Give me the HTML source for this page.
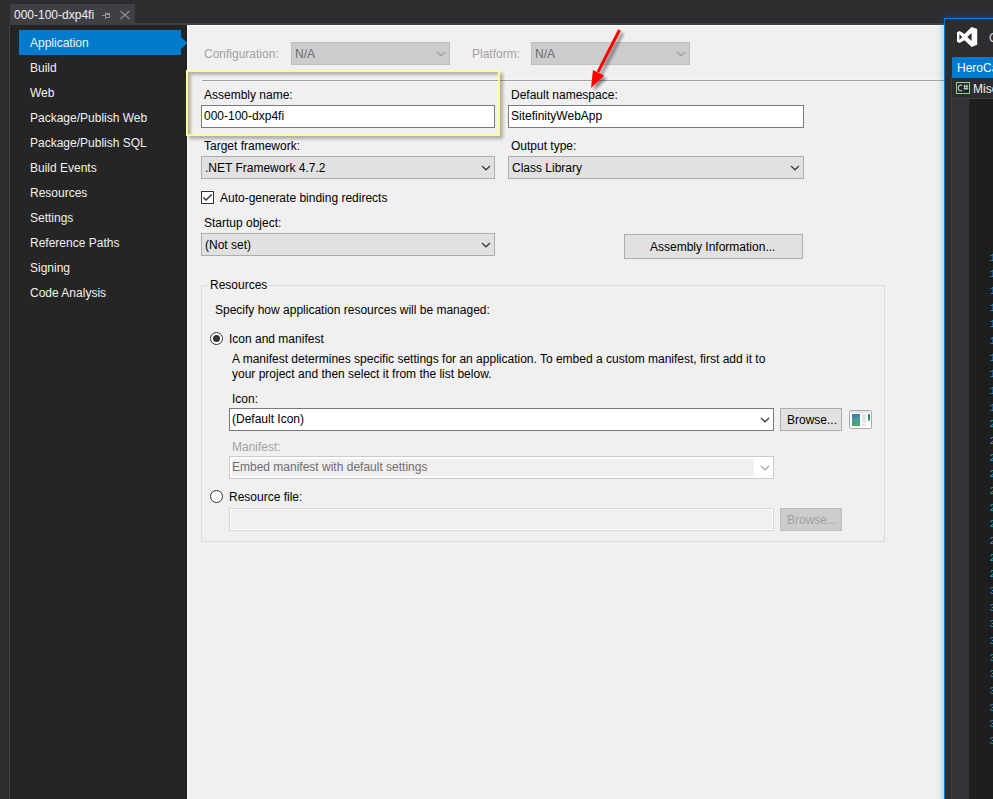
<!DOCTYPE html>
<html><head><meta charset="utf-8">
<style>
*{margin:0;padding:0;box-sizing:border-box}
html,body{width:993px;height:799px;overflow:hidden;background:#2d2d30;position:relative;font-family:"Liberation Sans",sans-serif;font-size:12px}
.a{position:absolute}
.t{position:absolute;font:12px/15px "Liberation Sans",sans-serif;white-space:nowrap;color:#000}
.side .t{color:#f1f1f1}
.cb{position:absolute;background:#e1e1e1;border:1px solid #adadad}
.cbd{position:absolute;background:#cccccc;border:1px solid #bfbfbf}
.tb{position:absolute;background:#fff;border:1px solid #7a7a7a}
.chev{position:absolute;width:9px;height:5px}
</style></head><body>
<!-- tab well -->
<div class="a" style="left:10px;top:4px;width:125px;height:19px;background:#3f3f46"></div>
<div class="a" style="left:10px;top:23px;width:934px;height:2px;background:#3f3f46"></div>
<div class="t" style="left:14px;top:8px;color:#f1f1f1">000-100-dxp4fi</div>
<!-- pin icon -->
<svg class="a" style="left:100px;top:10px" width="14" height="12" viewBox="0 0 14 12">
<path d="M2 5.5H5.5M5.5 2V9M6 3.5H9.5V7.5H6" stroke="#8f8f8f" stroke-width="1" fill="none"/>
<rect x="6" y="3" width="4" height="2" fill="#8f8f8f"/>
</svg>
<!-- close icon -->
<svg class="a" style="left:119px;top:10px" width="12" height="10" viewBox="0 0 12 10">
<path d="M1.5 1L10.5 9M10.5 1L1.5 9" stroke="#8f8f8f" stroke-width="1.2" fill="none"/>
</svg>

<!-- left strip line -->
<div class="a" style="left:9px;top:25px;width:1px;height:774px;background:#3f3f46"></div>
<!-- sidebar -->
<div class="a side" style="left:10px;top:25px;width:177px;height:774px;background:#252526">
  <div class="a" style="left:9px;top:5px;width:162px;height:25px;background:#007acc"></div>
  <div class="a" style="left:176px;top:0;width:1px;height:774px;background:#1b1b1c"></div>
  <svg class="a" style="left:171px;top:12px" width="7" height="12" viewBox="0 0 7 12"><path d="M0 0L6.5 6L0 12Z" fill="#007acc"/></svg>
  <div class="t" style="left:20px;top:11px">Application</div>
  <div class="t" style="left:20px;top:36px">Build</div>
  <div class="t" style="left:20px;top:61px">Web</div>
  <div class="t" style="left:20px;top:86px">Package/Publish Web</div>
  <div class="t" style="left:20px;top:111px">Package/Publish SQL</div>
  <div class="t" style="left:20px;top:136px">Build Events</div>
  <div class="t" style="left:20px;top:161px">Resources</div>
  <div class="t" style="left:20px;top:186px">Settings</div>
  <div class="t" style="left:20px;top:211px">Reference Paths</div>
  <div class="t" style="left:20px;top:236px">Signing</div>
  <div class="t" style="left:20px;top:261px">Code Analysis</div>
</div>

<!-- panel -->
<div class="a" id="panel" style="left:187px;top:25px;width:757px;height:774px;background:#f0f0f0;border-left:1px solid #fff;border-top:1px solid #fff"></div>


<!-- config row -->
<div class="t" style="left:204px;top:47px;color:#a2a2a2">Configuration:</div>
<div class="cbd" style="left:291px;top:42px;width:159px;height:23px"></div>
<div class="t" style="left:295px;top:47px;color:#6d6d6d">N/A</div>
<svg class="chev" style="left:436px;top:51px;width:10px;height:6px" viewBox="0 0 10 6"><path d="M1 1L5 4.8L9 1" stroke="#a0a0a0" stroke-width="1.3" fill="none"/></svg>
<div class="t" style="left:472px;top:47px;color:#a2a2a2">Platform:</div>
<div class="cbd" style="left:531px;top:42px;width:159px;height:23px"></div>
<div class="t" style="left:535px;top:47px;color:#6d6d6d">N/A</div>
<svg class="chev" style="left:676px;top:51px;width:10px;height:6px" viewBox="0 0 10 6"><path d="M1 1L5 4.8L9 1" stroke="#a0a0a0" stroke-width="1.3" fill="none"/></svg>
<!-- separator -->
<div class="a" style="left:201px;top:79px;width:743px;height:3px;background:#f6f6f6"></div><div class="a" style="left:201px;top:80px;width:1px;height:1px;background:#fff"></div>
<div class="a" style="left:202px;top:80px;width:742px;height:1px;background:#a0a0a0"></div>

<!-- assembly / namespace -->
<div class="t" style="left:204px;top:88px">Assembly name:</div>
<div class="tb" style="left:201px;top:105px;width:294px;height:23px"></div>
<div class="t" style="left:204px;top:109px">000-100-dxp4fi</div>
<div class="t" style="left:511px;top:88px">Default namespace:</div>
<div class="tb" style="left:508px;top:105px;width:296px;height:23px"></div>
<div class="t" style="left:511px;top:109px">SitefinityWebApp</div>

<!-- framework / output -->
<div class="t" style="left:204px;top:139px">Target framework:</div>
<div class="cb" style="left:201px;top:156px;width:294px;height:23px"></div>
<div class="t" style="left:205px;top:161px">.NET Framework 4.7.2</div>
<svg class="chev" style="left:481px;top:165px;width:10px;height:6px" viewBox="0 0 10 6"><path d="M1 1L5 4.8L9 1" stroke="#3a3a3a" stroke-width="1.3" fill="none"/></svg>
<div class="t" style="left:511px;top:139px">Output type:</div>
<div class="cb" style="left:508px;top:156px;width:296px;height:23px"></div>
<div class="t" style="left:512px;top:161px">Class Library</div>
<svg class="chev" style="left:790px;top:165px;width:10px;height:6px" viewBox="0 0 10 6"><path d="M1 1L5 4.8L9 1" stroke="#3a3a3a" stroke-width="1.3" fill="none"/></svg>

<!-- checkbox -->
<div class="a" style="left:200px;top:190px;width:15px;height:15px;background:#f9f9f9"></div>
<div class="a" style="left:201px;top:191px;width:13px;height:13px;border:1px solid #333;background:#fff"></div>
<svg class="a" style="left:201px;top:191px" width="13" height="13" viewBox="0 0 13 13"><path d="M2.3 6.4L5 9.1L10.6 3.4" stroke="#333" stroke-width="1.4" fill="none"/></svg>
<div class="t" style="left:220px;top:191px">Auto-generate binding redirects</div>

<!-- startup -->
<div class="t" style="left:204px;top:216px">Startup object:</div>
<div class="cb" style="left:201px;top:233px;width:294px;height:23px"></div>
<div class="t" style="left:205px;top:238px">(Not set)</div>
<svg class="chev" style="left:481px;top:242px;width:10px;height:6px" viewBox="0 0 10 6"><path d="M1 1L5 4.8L9 1" stroke="#3a3a3a" stroke-width="1.3" fill="none"/></svg>
<div class="cb" style="left:624px;top:234px;width:179px;height:25px"></div>
<div class="t" style="left:650px;top:240px">Assembly Information...</div>

<!-- resources group -->
<div class="a" style="left:201px;top:285px;width:684px;height:257px;border:1px solid #dcdcdc"></div>
<div class="a" style="left:208px;top:280px;width:61px;height:10px;background:#f0f0f0"></div>
<div class="t" style="left:210px;top:278px">Resources</div>
<div class="t" style="left:215px;top:303px">Specify how application resources will be managed:</div>

<svg class="a" style="left:210px;top:332px" width="13" height="13" viewBox="0 0 13 13"><circle cx="6.5" cy="6.5" r="6" fill="#fff" stroke="#333" stroke-width="1"/><circle cx="6.5" cy="6.5" r="3.5" fill="#333"/></svg>
<div class="t" style="left:229px;top:332px">Icon and manifest</div>
<div class="t" style="left:232px;top:352px">A manifest determines specific settings for an application. To embed a custom manifest, first add it to</div>
<div class="t" style="left:232px;top:367px">your project and then select it from the list below.</div>
<div class="t" style="left:232px;top:392px">Icon:</div>
<div class="tb" style="left:229px;top:408px;width:545px;height:23px"></div>
<div class="t" style="left:232px;top:412px">(Default Icon)</div>
<svg class="chev" style="left:760px;top:417px;width:10px;height:6px" viewBox="0 0 10 6"><path d="M1 1L5 4.8L9 1" stroke="#3a3a3a" stroke-width="1.3" fill="none"/></svg>
<div class="cb" style="left:780px;top:408px;width:62px;height:23px"></div>
<div class="t" style="left:787px;top:413px">Browse...</div>
<!-- icon preview -->
<div class="a" style="left:849px;top:410px;width:23px;height:19px;border:1.5px solid #ababab;border-radius:2px;background:#fff"></div>
<div class="a" style="left:851px;top:411px;width:19px;height:2px;background:#dfe3ea"></div>
<div class="a" style="left:852px;top:414px;width:8px;height:12px;background:linear-gradient(165deg,#3d6fae 0%,#4a9a9a 45%,#3fae5a 100%)"></div>
<div class="a" style="left:862px;top:414px;width:4px;height:9px;background:#e3e3e3"></div>
<div class="a" style="left:862px;top:424px;width:4px;height:2px;background:#e3e3e3"></div>
<div class="a" style="left:868px;top:414px;width:2px;height:7px;border-radius:1px;background:linear-gradient(180deg,#2a5faa,#3fae4a)"></div>
<div class="t" style="left:232px;top:440px;color:#a2a2a2">Manifest:</div>
<div class="a" style="left:229px;top:456px;width:545px;height:23px;border:1px solid #cbcbcb;background:#fff"></div>
<div class="a" style="left:232px;top:459px;width:522px;height:17px;background:#f0f0f0"></div>
<div class="t" style="left:232px;top:460px;color:#6d6d6d">Embed manifest with default settings</div>
<svg class="chev" style="left:760px;top:465px;width:10px;height:6px" viewBox="0 0 10 6"><path d="M1 1L5 4.8L9 1" stroke="#a8a8a8" stroke-width="1.3" fill="none"/></svg>

<svg class="a" style="left:210px;top:490px" width="13" height="13" viewBox="0 0 13 13"><circle cx="6.5" cy="6.5" r="6" fill="#fff" stroke="#333" stroke-width="1"/></svg>
<div class="t" style="left:229px;top:490px">Resource file:</div>
<div class="a" style="left:229px;top:508px;width:545px;height:23px;border:1px solid #d9d9d9;background:#f0f0f0;box-shadow:inset 0 0 0 1px #fff"></div>
<div class="cbd" style="left:780px;top:508px;width:62px;height:23px"></div>
<div class="t" style="left:787px;top:513px;color:#a2a2a2">Browse...</div>

<!-- yellow highlight -->
<div class="a" style="left:186px;top:70px;width:314px;height:66px;border:2px solid #fefd92;box-shadow:3px 3px 3px rgba(0,0,0,0.28), inset 3px 3px 3px rgba(0,0,0,0.25)"></div>

<!-- red arrow -->
<svg class="a" style="left:580px;top:20px" width="60" height="80" viewBox="580 20 60 80">
<defs><filter id="sh" x="-50%" y="-50%" width="200%" height="200%"><feGaussianBlur stdDeviation="1.8"/></filter></defs>
<g transform="translate(3,3)" filter="url(#sh)" opacity="0.42">
<path d="M619.5 30L598 72" stroke="#000" stroke-width="3"/>
<path d="M593 70L604 75.5L591 88Z" fill="#000"/>
</g>
<path d="M619.5 30L598 72" stroke="#ff0000" stroke-width="3"/>
<path d="M593 70L604 75.5L591 88Z" fill="#ff0000"/>
</svg>



<!-- glow -->


<div class="a" style="left:944px;top:18px;width:60px;height:800px;background:#2d2d30;border:1px solid #007acc;box-shadow:0 0 8px rgba(0,122,204,0.45)"></div>
<svg class="a" style="left:955px;top:25px" width="25" height="25" viewBox="955 25 25 25">
<path fill-rule="evenodd" fill="#fff" d="M971.6 26.9L977.2 29.1L977.2 44.7L971.6 47L964.5 40.2L959.6 43L957 41.8L957 32.2L959.6 31L964.5 33.9Z M959.4 33.9L962.1 36.9L959.4 39.9Z M971.6 32.9L967.3 37L971.6 41.1Z"/>
</svg>
<div class="t" style="left:989px;top:31px;color:#d8d8d8">O</div>
<div class="a" style="left:952px;top:57px;width:41px;height:21px;background:#007acc;overflow:hidden">
  <div class="t" style="left:5px;top:4px;color:#fff">HeroCatalog</div>
</div>
<div class="a" style="left:951px;top:78px;width:1px;height:721px;background:#3f3f46"></div>
<div class="a" style="left:952px;top:98px;width:41px;height:1px;background:#3f3f46"></div>
<div class="a" style="left:956px;top:82px;width:14px;height:12px;border:1px solid #86d98a;background:#252526"></div>
<svg class="a" style="left:956px;top:82px" width="14" height="12" viewBox="956 82 14 12"><path d="M962.2 85.3Q958.3 84.3 958.3 87.9Q958.3 91.5 962.2 90.6" stroke="#d8d8d8" stroke-width="1.1" fill="none"/><path d="M964.8 84.5V90M966.9 84.5V90M963.6 86.3H968.2M963.6 88.4H968.2" stroke="#d8d8d8" stroke-width="0.9"/></svg>
<div class="t" style="left:973px;top:82px;color:#f1f1f1">Miscellaneous</div>
<div class="a" style="left:952px;top:99px;width:17px;height:700px;background:#333337"></div>
<div class="a" style="left:969px;top:99px;width:24px;height:700px;background:#1e1e1e"></div>
<div id="ln"><div class="a" style="left:989.4px;top:251.5px;font:11px/12px 'Liberation Mono',monospace;color:#2b91af">10</div><div class="a" style="left:989.4px;top:268.2px;font:11px/12px 'Liberation Mono',monospace;color:#2b91af">11</div><div class="a" style="left:989.4px;top:284.8px;font:11px/12px 'Liberation Mono',monospace;color:#2b91af">12</div><div class="a" style="left:989.4px;top:301.5px;font:11px/12px 'Liberation Mono',monospace;color:#2b91af">13</div><div class="a" style="left:989.4px;top:318.2px;font:11px/12px 'Liberation Mono',monospace;color:#2b91af">14</div><div class="a" style="left:989.4px;top:334.8px;font:11px/12px 'Liberation Mono',monospace;color:#2b91af">15</div><div class="a" style="left:989.4px;top:351.5px;font:11px/12px 'Liberation Mono',monospace;color:#2b91af">16</div><div class="a" style="left:989.4px;top:368.2px;font:11px/12px 'Liberation Mono',monospace;color:#2b91af">17</div><div class="a" style="left:989.4px;top:384.8px;font:11px/12px 'Liberation Mono',monospace;color:#2b91af">18</div><div class="a" style="left:989.4px;top:401.5px;font:11px/12px 'Liberation Mono',monospace;color:#2b91af">19</div><div class="a" style="left:989.4px;top:418.2px;font:11px/12px 'Liberation Mono',monospace;color:#2b91af">20</div><div class="a" style="left:989.4px;top:434.8px;font:11px/12px 'Liberation Mono',monospace;color:#2b91af">21</div><div class="a" style="left:989.4px;top:451.5px;font:11px/12px 'Liberation Mono',monospace;color:#2b91af">22</div><div class="a" style="left:989.4px;top:468.2px;font:11px/12px 'Liberation Mono',monospace;color:#2b91af">23</div><div class="a" style="left:989.4px;top:484.8px;font:11px/12px 'Liberation Mono',monospace;color:#2b91af">24</div><div class="a" style="left:989.4px;top:501.5px;font:11px/12px 'Liberation Mono',monospace;color:#2b91af">25</div><div class="a" style="left:989.4px;top:518.2px;font:11px/12px 'Liberation Mono',monospace;color:#2b91af">26</div><div class="a" style="left:989.4px;top:534.8px;font:11px/12px 'Liberation Mono',monospace;color:#2b91af">27</div><div class="a" style="left:989.4px;top:551.5px;font:11px/12px 'Liberation Mono',monospace;color:#2b91af">28</div><div class="a" style="left:989.4px;top:568.2px;font:11px/12px 'Liberation Mono',monospace;color:#2b91af">29</div><div class="a" style="left:989.4px;top:584.8px;font:11px/12px 'Liberation Mono',monospace;color:#2b91af">30</div><div class="a" style="left:989.4px;top:601.5px;font:11px/12px 'Liberation Mono',monospace;color:#2b91af">31</div><div class="a" style="left:989.4px;top:618.2px;font:11px/12px 'Liberation Mono',monospace;color:#2b91af">32</div><div class="a" style="left:989.4px;top:634.8px;font:11px/12px 'Liberation Mono',monospace;color:#2b91af">33</div><div class="a" style="left:989.4px;top:651.5px;font:11px/12px 'Liberation Mono',monospace;color:#2b91af">34</div><div class="a" style="left:989.4px;top:668.2px;font:11px/12px 'Liberation Mono',monospace;color:#2b91af">35</div><div class="a" style="left:989.4px;top:684.8px;font:11px/12px 'Liberation Mono',monospace;color:#2b91af">36</div><div class="a" style="left:989.4px;top:701.5px;font:11px/12px 'Liberation Mono',monospace;color:#2b91af">37</div><div class="a" style="left:989.4px;top:718.2px;font:11px/12px 'Liberation Mono',monospace;color:#2b91af">38</div><div class="a" style="left:989.4px;top:734.8px;font:11px/12px 'Liberation Mono',monospace;color:#2b91af">39</div></div>


</body></html>
